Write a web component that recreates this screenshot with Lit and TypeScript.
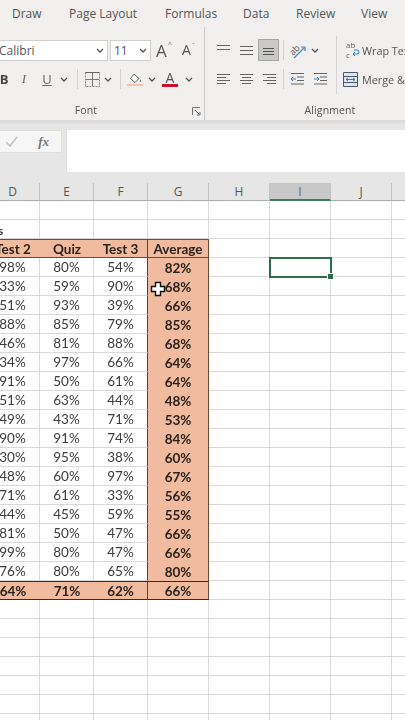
import { LitElement, html, css, svg } from "lit";
import { customElement } from "lit/decorators.js";

const rows: [string, string, string, string][] = [
  ["98%","80%","54%","82%"],["33%","59%","90%","68%"],["51%","93%","39%","66%"],
  ["88%","85%","79%","85%"],["46%","81%","88%","68%"],["34%","97%","66%","64%"],
  ["91%","50%","61%","64%"],["51%","63%","44%","48%"],["49%","43%","71%","53%"],
  ["90%","91%","74%","84%"],["30%","95%","38%","60%"],["48%","60%","97%","67%"],
  ["71%","61%","33%","56%"],["44%","45%","59%","55%"],["81%","50%","47%","66%"],
  ["99%","80%","47%","66%"],["76%","80%","65%","80%"],
];
const COLS = ["D","E","F","G","H","I","J",""];

const chev = html`<svg class="chev" width="8" height="5" viewBox="0 0 8 5"><path d="M1 1l3 3 3-3" fill="none" stroke="#555" stroke-width="1.3"/></svg>`;
const lines = (ys: [number, number, number][], w = 15, h = 14, color = "#666") => html`<svg width=${w} height=${h} viewBox="0 0 ${w} ${h}">${ys.map(([y, a, b]) => svg`<path d="M${a} ${y}.5H${b}" stroke=${color} stroke-width="1"/>`)}</svg>`;

@customElement("app-root")
export class AppRoot extends LitElement {
  static styles = css`
    :host { display: block; width: 405px; height: 720px; overflow: hidden; position: relative; background: #fff; font-family: "Open Sans", "Liberation Sans", sans-serif; color: #444; }
    .blur { filter: blur(0.35px); }
    .ribbon { background: #f1f0ee; height: 120px; border-bottom: 3px solid #dcdcdc; box-sizing: content-box; }
    .tabs { display: flex; height: 27px; align-items: center; font-size: 12px; color: #555; padding-left: 12px; white-space: nowrap; }
    .tabs span:nth-child(1) { width: 57px; }
    .tabs span:nth-child(2) { width: 96px; }
    .tabs span:nth-child(3) { width: 78px; }
    .tabs span:nth-child(4) { width: 53px; }
    .tabs span:nth-child(5) { width: 65px; }
    .groups { display: flex; height: 93px; }
    .g-font { width: 204px; border-right: 1px solid #c9c9c9; flex: none; position: relative; display: flex; flex-direction: column; }
    .g-align { width: 131px; flex: none; display: flex; flex-direction: column; }
    .vsep { width: 1px; height: 58px; margin-top: 9px; background: #d4d4d4; flex: none; }
    .g-wrap { flex: 1; min-width: 0; display: flex; flex-direction: column; white-space: nowrap; overflow: hidden; }
    .r1 { display: flex; align-items: center; height: 22px; margin-top: 12px; }
    .r2 { display: flex; align-items: center; height: 24px; margin-top: 6px; }
    .label { font-size: 10.5px; line-height: 16px; color: #555; text-align: center; margin-top: 11px; height: 16px; letter-spacing: 0.1px; }
    .g-font .label { width: 172px; }
    .g-align .label { width: 250px; flex: none; }
    .box { background: #fff; border: 1px solid #cfcfcf; height: 21px; box-sizing: border-box; display: flex; align-items: center; justify-content: space-between; font-size: 12px; color: #555; padding: 0 3px; }
    .fname { width: 109px; margin-left: -1px; padding-left: 0; }
    .fname span { margin-left: -1px; }
    .fsize { width: 41px; margin-left: 2px; }
    .grow { font-size: 17px; color: #555; width: 16px; margin-left: 5px; position: relative; line-height: 1; }
    .shrink { font-size: 14px; color: #555; width: 14px; margin-left: 10px; position: relative; line-height: 1; }
    .mini { position: absolute; font-size: 7px; top: -1px; left: 12px; color: #777; }
    .shrink .mini { left: 10px; }
    .slot { display: flex; align-items: center; justify-content: center; flex: none; font-size: 13px; color: #666; }
    .b { width: 16px; margin-left: -4px; font-weight: 700; color: #444; }
    .i { width: 24px; font-style: italic; font-family: "Liberation Serif", serif; }
    .u { width: 22px; text-decoration: underline; color: #667; }
    .c12 { width: 12px; } .c16 { width: 16px; } .c14 { width: 14px; }
    .s14 { width: 14px; } .s22 { width: 22px; } .s23 { width: 23px; } .s24 { width: 24px; }
    .s16 { width: 16px; } .s8 { width: 8px; } .s5 { width: 5px; }
    .sep { width: 1px; height: 20px; background: #d2d2d2; flex: none; }
    .launch { position: absolute; right: 3px; bottom: 4px; }
    .color-a { font-size: 14px; line-height: 11px; color: #555; display: flex; flex-direction: column; align-items: center; width: 16px; }
    .color-a i { display: block; width: 16px; height: 3px; background: #c4122f; margin-top: 1px; }
    .fill i { background: #f0c8ae; height: 2px; margin-top: 0; }
    .sel { width: 21px; height: 22px; background: #c9c9c7; border: 1px solid #a4a4a4; box-sizing: border-box; display: flex; align-items: center; justify-content: center; flex: none; }
    .a1 { margin-left: 7px; width: 23px; }
    .a2 { width: 23px; }
    .wrap { display: flex; align-items: center; font-size: 10.8px; color: #555; }
    .wrap svg, .wrap span { flex: none; }
    .wrap.w1 { margin-top: 12px; height: 22px; margin-left: 8px; gap: 1px; }
    .wrap.w2 { margin-top: 6px; height: 24px; margin-left: 6px; gap: 4px; }
    .formula { background: #e6e6e6; height: 60px; display: flex; gap: 4px; align-items: flex-start; padding-top: 7px; box-sizing: border-box; }
    .fx { width: 62px; height: 23px; background: #f6f6f6; border: 1px solid #dedede; border-left: none; box-sizing: border-box; display: flex; align-items: center; justify-content: flex-end; gap: 20px; padding-right: 12px; font-family: "Liberation Serif", serif; font-style: italic; font-size: 13px; font-weight: 700; color: #777; }
    .input { flex: 1; height: 42px; background: #fff; border-left: 1px solid #dcdcdc; }
    .sheet { display: grid; grid-template-columns: 54px 54px 54px 61px 61px 61px 61px 61px; margin-left: -14px; position: relative; font-family: Lato, "Liberation Sans", sans-serif; }
    .hd { height: 18px; background: #e6e6e6; border-right: 1px solid #c2c2c2; border-bottom: 1px solid #adadad; box-sizing: border-box; display: flex; align-items: center; justify-content: center; font-size: 12px; color: #555; font-family: "Open Sans", sans-serif; }
    .hd.on { background: #c8c8c8; border-bottom: 2px solid #3f7d5c; color: #666; }
    .c { height: 19px; box-sizing: border-box; border-right: 1px solid #d9d9d9; border-bottom: 1px solid #d9d9d9; display: flex; align-items: center; justify-content: center; font-size: 13.5px; color: #3c3c3c; position: relative; }
    .peach { background: #f0bb9e; border-right: none; border-bottom: none; font-weight: 700; color: #2c211c; }
    .avg { background: #f0bb9e; border-right: 1px solid #6b4a38; border-bottom: none; color: #2c211c; font-weight: 700; }
    .c.head { font-weight: 700; border-top: 1px solid #6b4a38; border-bottom: 1px solid #6b4a38; }
    .c.total { font-weight: 700; border-top: 1px solid #3c2a20; border-bottom: 1px solid #3c2a20; }
    .c.rb { border-right: 1px solid #5a3f30; }
    .c.frag { justify-content: flex-start; padding-left: 12px; font-weight: 700; font-size: 12px; color: #333; align-items: flex-end; }
    .c.picked { outline: 2px solid #2f6b4c; outline-offset: -1px; z-index: 2; }
    .handle { position: absolute; right: -4px; bottom: -4px; width: 5px; height: 5px; background: #2f6b4c; border: 1px solid #fff; }
    .cursor { position: absolute; left: 150px; top: 281px; z-index: 5; }
  `;

  render() {
    const blank = () => html`<div class="c"></div>`;
    const bodyRow = (r: string[], i: number) => html`
      <div class="c">${r[0]}</div><div class="c">${r[1]}</div><div class="c rb">${r[2]}</div>
      <div class="c avg">${r[3]}</div>
      ${blank()}${i === 0 ? html`<div class="c picked"><span class="handle"></span></div>` : blank()}${blank()}${blank()}`;
    return html`
      <div class="blur">
        <div class="ribbon">
          <div class="tabs"><span>Draw</span><span>Page Layout</span><span>Formulas</span><span>Data</span><span>Review</span><span>View</span></div>
          <div class="groups">
            <div class="g-font">
              <div class="r1">
                <div class="box fname"><span>Calibri</span>${chev}</div>
                <div class="box fsize"><span>11</span>${chev}</div>
                <div class="grow">A<span class="mini">^</span></div>
                <div class="shrink">A<span class="mini">ˇ</span></div>
              </div>
              <div class="r2">
                <div class="slot b">B</div><div class="slot i">I</div><div class="slot u">U</div>
                <div class="slot c12">${chev}</div>
                <div class="slot s14"><div class="sep"></div></div>
                <div class="slot s16"><svg width="15" height="15" viewBox="0 0 15 15"><path d="M.5.5h14v14H.5z" fill="none" stroke="#8a8a8a" stroke-dasharray="2 1"/><path d="M7.500 1v13M1 7.500h13" stroke="#777"/><path d="M.5.5h14" stroke="#666"/></svg></div>
                <div class="slot c16">${chev}</div>
                <div class="slot s8"><div class="sep"></div></div>
                <div class="slot s22 fill"><div class="color-a"><svg width="15" height="11" viewBox="0 0 15 11"><path d="M6 1l5 4.500-4 4L2.500 5.500z" fill="#fff" stroke="#666"/><path d="M12.500 6.500c-.8 1.400-1 2 0 2.500 1-.5.8-1.100 0-2.500z" fill="#666"/></svg><i></i></div></div>
                <div class="slot c12">${chev}</div>
                <div class="slot s24"><div class="color-a">A<i></i></div></div>
                <div class="slot c14">${chev}</div>
              </div>
              <div class="label">Font</div>
              <svg class="launch" width="9" height="9" viewBox="0 0 9 9"><path d="M.5 8V.5H8M3 3l5 5M5 8h3V5" fill="none" stroke="#777"/></svg>
            </div>
            <div class="g-align">
              <div class="r1">
                <div class="slot a1">${lines([[2,1,14],[6,1,14]])}</div>
                <div class="slot a2">${lines([[3,1,14],[7,1,14],[11,1,14]])}</div>
                <div class="sel">${lines([[5,2,13],[8,2,13],[11,2,13]], 15, 14, "#555")}</div>
                <div class="slot s8"><div class="sep"></div></div>
                <div class="slot s22"><svg width="18" height="17" viewBox="0 0 18 17"><text x="1" y="11" font-size="9" fill="#666" transform="rotate(-45 6 9)" font-family="Open Sans">ab</text><path d="M5 16L15 6M12 5h4v4" fill="none" stroke="#4a88b8" stroke-width="1.200"/></svg></div>
                <div class="slot c12">${chev}</div>
              </div>
              <div class="r2">
                <div class="slot a1">${lines([[2,1,14],[5,1,10],[8,1,14],[11,1,10]])}</div>
                <div class="slot a2">${lines([[2,1,14],[5,3,12],[8,1,14],[11,3,12]])}</div>
                <div class="slot a2">${lines([[2,1,14],[5,5,14],[8,1,14],[11,5,14]])}</div>
                <div class="slot s5"><div class="sep"></div></div>
                <div class="slot s23"><svg width="15" height="14" viewBox="0 0 15 14"><path d="M1 1.500h13M7 5h7M7 8.500h7M1 12h13" stroke="#666"/><path d="M6 7H1M3 5L1 7l2 2" fill="none" stroke="#3a80b8"/></svg></div>
                <div class="slot s23"><svg width="15" height="14" viewBox="0 0 15 14"><path d="M1 1.500h13M7 5h7M7 8.500h7M1 12h13" stroke="#666"/><path d="M1 7h5M4 5l2 2-2 2" fill="none" stroke="#3a80b8"/></svg></div>
              </div>
              <div class="label">Alignment</div>
            </div>
            <div class="vsep"></div>
            <div class="g-wrap">
              <div class="wrap w1"><svg width="16" height="18" viewBox="0 0 16 18"><text x="1" y="7" font-size="8" fill="#666" font-family="Open Sans">ab</text><text x="1" y="17" font-size="8" fill="#666" font-family="Open Sans">c</text><path d="M8 13h4a2 2 0 0 0 0-4H9M10 11l-2 2 2 2" fill="none" stroke="#3a80b8"/></svg><span>Wrap Text</span></div>
              <div class="wrap w2"><svg width="15" height="15" viewBox="0 0 15 15"><path d="M.5.500h14v14H.5z" fill="#d8e8f4" stroke="#556"/><path d="M.5 4.500h14M.5 10.500h14" stroke="#556"/><path d="M3 7.500h9M5 6L3 7.500 5 9M10 6l2 1.500L10 9" fill="none" stroke="#3a80b8"/></svg><span>Merge &amp; Center</span></div>
            </div>
          </div>
        </div>
        <div class="formula">
          <div class="fx"><svg width="13" height="11" viewBox="0 0 13 11"><path d="M1 6l4 4 7-9" fill="none" stroke="#c4c4c4" stroke-width="1.600"/></svg><span>fx</span></div>
          <div class="input"></div>
        </div>
        <div class="sheet">
          ${COLS.map((c) => html`<div class="hd ${c === "I" ? "on" : ""}">${c}</div>`)}
          ${COLS.map(() => blank())}
          ${COLS.map((_, i) => (i === 0 ? html`<div class="c frag">s</div>` : blank()))}
          <div class="c peach head">Test 2</div><div class="c peach head">Quiz</div><div class="c peach head rb">Test 3</div><div class="c avg head">Average</div>
          ${blank()}${blank()}${blank()}${blank()}
          ${rows.map((r, i) => bodyRow(r, i))}
          <div class="c peach total">64%</div><div class="c peach total">71%</div><div class="c peach total rb">62%</div><div class="c avg total">66%</div>
          ${blank()}${blank()}${blank()}${blank()}
          ${Array.from({ length: 7 }, () => COLS.map(() => blank()))}
        </div>
      </div>
      <svg class="cursor" width="16" height="16" viewBox="0 0 16 16"><path d="M5.500 1.500h5v4h4v5h-4v4h-5v-4h-4v-5h4z" fill="#fff" stroke="#111" stroke-width="1.400"/></svg>
    `;
  }
}
